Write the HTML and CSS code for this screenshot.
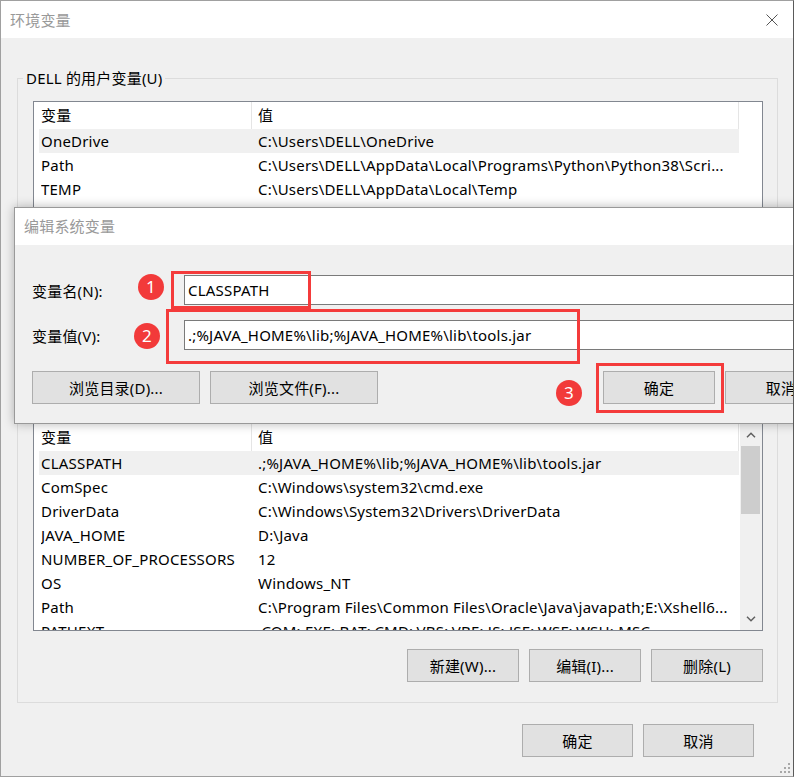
FILE: index.html
```html
<!DOCTYPE html>
<html lang="zh-CN">
<head>
    <meta charset="UTF-8">
    <meta name="viewport" content="width=device-width, initial-scale=1.0">
    <title>环境变量</title>
    <link rel="stylesheet" href="styles.css">
</head>
<body>
    <div class="window">
        <div class="titlebar">
            <span class="title">环境变量</span>
            <svg class="close" width="12" height="12" viewBox="0 0 12 12">
                <path d="M0.5 0.5L11.5 11.5M11.5 0.5L0.5 11.5" stroke="#555" stroke-width="1" fill="none"/>
            </svg>
        </div>

        <div class="group group-user">
            <div class="group-title">DELL 的用户变量(U)</div>
            <div class="list list-user">
                <div class="list-body">
                    <div class="list-head">
                        <div class="head-name">变量</div>
                        <div class="head-value">值</div>
                    </div>
                    <div class="row selected"><span>OneDrive</span><span>C:\Users\DELL\OneDrive</span></div>
                    <div class="row"><span>Path</span><span>C:\Users\DELL\AppData\Local\Programs\Python\Python38\Scri...</span></div>
                    <div class="row"><span>TEMP</span><span>C:\Users\DELL\AppData\Local\Temp</span></div>
                </div>
            </div>
        </div>

        <div class="group group-sys">
            <div class="group-title">系统变量(S)</div>
            <div class="list list-sys">
                <div class="list-body">
                    <div class="list-head">
                        <div class="head-name">变量</div>
                        <div class="head-value">值</div>
                    </div>
                    <div class="row selected"><span>CLASSPATH</span><span>.;%JAVA_HOME%\lib;%JAVA_HOME%\lib\tools.jar</span></div>
                    <div class="row"><span>ComSpec</span><span>C:\Windows\system32\cmd.exe</span></div>
                    <div class="row"><span>DriverData</span><span>C:\Windows\System32\Drivers\DriverData</span></div>
                    <div class="row"><span>JAVA_HOME</span><span>D:\Java</span></div>
                    <div class="row"><span>NUMBER_OF_PROCESSORS</span><span>12</span></div>
                    <div class="row"><span>OS</span><span>Windows_NT</span></div>
                    <div class="row"><span>Path</span><span>C:\Program Files\Common Files\Oracle\Java\javapath;E:\Xshell6...</span></div>
                    <div class="row"><span>PATHEXT</span><span>.COM;.EXE;.BAT;.CMD;.VBS;.VBE;.JS;.JSE;.WSF;.WSH;.MSC</span></div>
                </div>
                <div class="scrollbar">
                    <div class="arrow">
                        <svg width="10" height="6" viewBox="0 0 10 6"><path d="M1 5.2L5 1.2L9 5.2" stroke="#606060" stroke-width="1.5" fill="none"/></svg>
                    </div>
                    <div class="thumb"></div>
                    <div class="track"></div>
                    <div class="arrow">
                        <svg width="10" height="6" viewBox="0 0 10 6"><path d="M1 0.8L5 4.8L9 0.8" stroke="#606060" stroke-width="1.5" fill="none"/></svg>
                    </div>
                </div>
            </div>
            <div class="buttons">
                <button class="btn">新建(W)...</button>
                <button class="btn">编辑(I)...</button>
                <button class="btn">删除(L)</button>
            </div>
        </div>

        <div class="footer">
            <button class="btn btn-footer">确定</button>
            <button class="btn btn-footer">取消</button>
        </div>

        <svg class="grip" width="12" height="12" viewBox="0 0 12 12">
            <rect x="9" y="1" width="2" height="2" fill="#a8a8a8"/>
            <rect x="5" y="5" width="2" height="2" fill="#a8a8a8"/>
            <rect x="9" y="5" width="2" height="2" fill="#a8a8a8"/>
            <rect x="1" y="9" width="2" height="2" fill="#a8a8a8"/>
            <rect x="5" y="9" width="2" height="2" fill="#a8a8a8"/>
            <rect x="9" y="9" width="2" height="2" fill="#a8a8a8"/>
        </svg>

        <!-- edit dialog on top of the main window -->
        <div class="dialog">
            <div class="dialog-title">编辑系统变量</div>
            <div class="dialog-body">
                <div class="field">
                    <label class="field-label">变量名(N):</label>
                    <input class="field-input" type="text" value="CLASSPATH">
                </div>
                <div class="field">
                    <label class="field-label">变量值(V):</label>
                    <input class="field-input" type="text" value=".;%JAVA_HOME%\lib;%JAVA_HOME%\lib\tools.jar">
                </div>
                <div class="dialog-buttons">
                    <button class="btn btn-browse">浏览目录(D)...</button>
                    <button class="btn btn-browse">浏览文件(F)...</button>
                    <button class="btn btn-ok">确定</button>
                    <button class="btn">取消</button>
                </div>
            </div>
        </div>

        <!-- annotations -->
        <div class="mark mark-1"></div>
        <div class="mark mark-2"></div>
        <div class="mark mark-3"></div>
        <div class="badge badge-1">1</div>
        <div class="badge badge-2">2</div>
        <div class="badge badge-3">3</div>
    </div>
</body>
</html>
```

FILE: styles.css
```css
* {
    box-sizing: border-box;
}
body {
    margin: 0;
    background-color: #3c3c3c;
    font-family: "Noto Sans", "Noto Sans CJK SC", sans-serif;
    font-size: 15px;
    letter-spacing: 0.2px;
    color: #000;
}
.window {
    position: relative;
    width: 794px;
    height: 777px;
    background-color: #f0f0f0;
    border: 1px solid #a0a0a0;
    border-right-color: #5a5a5a;
    overflow: hidden;
}
.titlebar {
    height: 37px;
    background-color: #fff;
    display: flex;
    align-items: center;
    justify-content: space-between;
    padding: 0 15px 0 9px;
}
.title {
    color: #999;
}
.group {
    border: 1px solid #dcdcdc;
    margin: 40px 15px 0 16px;
    padding: 0 14px 10px 15px;
}
.group-user {
    height: 305px;
}
.group-sys {
    margin-top: 17px;
    padding-bottom: 20px;
}
.group-title {
    width: max-content;
    margin: -11px 0 0 -10px;
    padding: 0 3px;
    line-height: 20px;
    background-color: #f0f0f0;
}
.list {
    margin-top: 13px;
    border: 1px solid #828790;
    background-color: #fff;
    display: flex;
}
.list-user {
    height: 220px;
}
.list-sys {
    height: 208px;
}
.list-body {
    flex: 1;
    overflow: hidden;
}
.list-head {
    display: flex;
    width: 705px;
    height: 27px;
    line-height: 27px;
}
.head-name {
    width: 218px;
    padding-left: 7px;
    border-right: 1px solid #e5e5e5;
}
.head-value {
    width: 487px;
    padding-left: 6px;
    border-right: 1px solid #e5e5e5;
}
.row {
    display: grid;
    grid-template-columns: 217px 1fr;
    width: 700px;
    height: 24px;
    margin-left: 5px;
    padding-left: 2px;
    line-height: 24px;
    white-space: nowrap;
}
.row span {
    overflow: hidden;
}
.row.selected {
    background-color: #f0f0f0;
}
.scrollbar {
    width: 22px;
    margin-left: 1px;
    background-color: #f0f0f0;
    display: flex;
    flex-direction: column;
}
.arrow {
    height: 22px;
    display: flex;
    align-items: center;
    justify-content: center;
}
.thumb {
    height: 68px;
    margin: 0 2px 0 1px;
    background-color: #cdcdcd;
}
.track {
    flex: 1;
}
.buttons {
    display: flex;
    justify-content: flex-end;
    gap: 10px;
    margin-top: 18px;
}
.btn {
    width: 112px;
    height: 33px;
    padding: 0;
    background-color: #e1e1e1;
    border: 1px solid #adadad;
    font-family: inherit;
    font-size: 15px;
    letter-spacing: 0.2px;
    color: #000;
}
.footer {
    display: flex;
    justify-content: flex-end;
    gap: 10px;
    margin-top: 21px;
    padding-right: 39px;
}
.btn-footer {
    width: 111px;
}
.grip {
    position: absolute;
    right: 2px;
    bottom: 2px;
}
.dialog {
    position: absolute;
    left: 13px;
    top: 206px;
    width: 841px;
    height: 217px;
    background-color: #f0f0f0;
    border: 1px solid #999;
    box-shadow: 0 0 10px rgba(0, 0, 0, 0.28);
}
.dialog-title {
    height: 37px;
    line-height: 37px;
    padding-left: 9px;
    background-color: #fff;
    color: #999;
}
.dialog-body {
    padding: 30px 17px 0 17px;
}
.field {
    display: flex;
    align-items: center;
    height: 30px;
}
.field + .field {
    margin-top: 15px;
}
.field-label {
    width: 152px;
}
.field-input {
    flex: 1;
    height: 30px;
    padding: 0 3px;
    border: 1px solid #7a7a7a;
    background-color: #fff;
    font-family: inherit;
    font-size: 15px;
    letter-spacing: 0.2px;
    color: #000;
    outline: none;
}
.dialog-buttons {
    display: flex;
    gap: 10px;
    margin-top: 21px;
}
.btn-browse {
    width: 168px;
}
.btn-ok {
    margin-left: auto;
}
.mark {
    position: absolute;
    border: 3px solid #f43b3b;
}
.mark-1 { left: 170px; top: 270px; width: 140px; height: 38px; }
.mark-2 { left: 165px; top: 308px; width: 414px; height: 55px; }
.mark-3 { left: 595px; top: 362px; width: 128px; height: 50px; }
.badge {
    position: absolute;
    width: 26px;
    height: 26px;
    border-radius: 50%;
    background-color: #f23a3a;
    color: #fff;
    font-size: 17px;
    line-height: 26px;
    text-align: center;
}
.badge-1 { left: 137px; top: 273px; }
.badge-2 { left: 133px; top: 322px; }
.badge-3 { left: 555px; top: 379px; }
```
